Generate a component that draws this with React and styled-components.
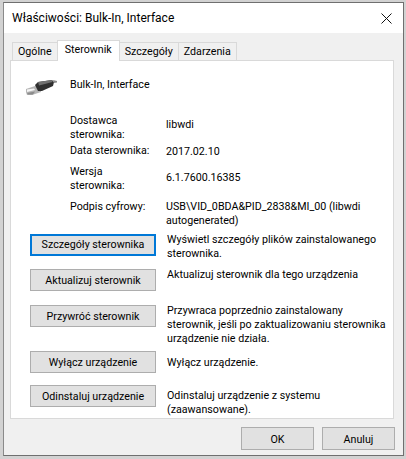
import React from 'react'
import styled, { createGlobalStyle } from 'styled-components'

const Global = createGlobalStyle`
  html, body { margin: 0; padding: 0; background: #d2d2d2; }
  body { font-family: Roboto, "Liberation Sans", sans-serif; font-size: 10.7px; color: #000; }
  * { box-sizing: border-box; }
`

const Page = styled.div`
  width: 406px;
  height: 459px;
  padding: 2px 2px 3px 3px;
`

const Dialog = styled.div`
  width: 401px;
  height: 454px;
  display: flex;
  flex-direction: column;
  background: #f0f0f0;
  border: 1px solid #6f6f6f;
  border-left-color: #8a8a8a;
`

const TitleBar = styled.div`
  height: 30px;
  flex: none;
  display: flex;
  align-items: center;
  justify-content: space-between;
  padding: 0 11px 0 8px;
  background: #fff;
`

const Title = styled.span`
  font-size: 12px;
`

const TabStrip = styled.div`
  display: flex;
  align-items: flex-end;
  height: 28px;
  flex: none;
  padding-left: 8px;
  margin-bottom: -1px;
  position: relative;
  z-index: 1;
`

const Tab = styled.div`
  height: ${p => (p.$active ? '21px' : '19px')};
  padding: ${p => (p.$active ? '0 7px 3px 7px' : '0 5px')};
  margin-right: -1px;
  display: flex;
  align-items: center;
  background: ${p => (p.$active ? '#fff' : '#f0f0f0')};
  border: 1px solid #d9d9d9;
  border-bottom: ${p => (p.$active ? 'none' : '1px solid #d9d9d9')};
  position: relative;
  z-index: ${p => (p.$active ? 1 : 0)};
`

const Panel = styled.div`
  margin-left: 6px;
  width: 384px;
  height: 359px;
  flex: none;
  background: #fff;
  border: 1px solid #d9d9d9;
  padding: 16px 0 0 15px;
`

const DeviceRow = styled.div`
  display: flex;
  align-items: flex-start;
  gap: 12px;
  height: 37px;
`

const DeviceName = styled.span`
  line-height: 15px;
`

const Info = styled.div`
  display: grid;
  grid-template-columns: 96px 220px;
  padding-left: 44px;
  line-height: 14px;
`

const Label = styled.div`
  margin-bottom: ${p => p.$gap}px;
`

const Value = styled.div`
  padding-top: ${p => p.$top || 0}px;
`

const Actions = styled.div`
  display: flex;
  flex-direction: column;
  margin-top: 6px;
  padding-left: 4px;
`

const Action = styled.div`
  display: grid;
  grid-template-columns: 126px 222px;
  column-gap: 11px;
  height: ${p => p.$height}px;
  line-height: 14px;
`

const ActionText = styled.div`
  margin-top: ${p => p.$top}px;
`

const Button = styled.div`
  height: 22px;
  padding-top: ${p => (p.$focused ? 0 : 1)}px;
  display: flex;
  align-items: center;
  justify-content: center;
  background: #e1e1e1;
  border: ${p => (p.$focused ? '2px solid #0078d7' : '1px solid #adadad')};
`

const Footer = styled.div`
  flex: 1;
  display: flex;
  justify-content: flex-end;
  gap: 8px;
  padding: 8px 8px 0 0;
`

const FooterButton = styled(Button)`
  width: 73px;
  height: 23px;
`

const CloseIcon = () => (
  <svg width="11" height="11" viewBox="0 0 11 11">
    <path d="M0.5 0.5 L10.5 10.5 M10.5 0.5 L0.5 10.5" stroke="#111" strokeWidth="1" fill="none" />
  </svg>
)

const UsbIcon = () => (
  <svg width="32" height="20" viewBox="0 0 32 20">
    <path d="M0 12 L9 9 L15 11 L15 15 L6 18 L1 18 L0 15 Z" fill="#b5b5b5" />
    <path d="M1 12.5 L8 11.5 L9 13 L1 15 Z" fill="#f5f5f5" />
    <path d="M1 16 L9 14.5 L7 17.5 L2 17.5 Z" fill="#8c8c8c" />
    <path d="M9 8 L12 5 L26 3 L28 5 L27 9 L16 14 L12 14 Z" fill="#2f2f2f" />
    <path d="M12 5 L26 3 L26.5 5 L13 8.5 Z" fill="#707070" />
    <path d="M27 3 L31 4 L31 5.5 L28 6 Z" fill="#8a8a8a" />
  </svg>
)

const actions = [
  { label: 'Szczegóły sterownika', text: 'Wyświetl szczegóły plików zainstalowanego sterownika.', height: 35, top: -1, focused: true },
  { label: 'Aktualizuj sterownik', text: 'Aktualizuj sterownik dla tego urządzenia', height: 36, top: -1 },
  { label: 'Przywróć sterownik', text: 'Przywraca poprzednio zainstalowany sterownik, jeśli po zaktualizowaniu sterownika urządzenie nie działa.', height: 46, top: -1 },
  { label: 'Wyłącz urządzenie', text: 'Wyłącz urządzenie.', height: 34, top: 5 },
  { label: 'Odinstaluj urządzenie', text: 'Odinstaluj urządzenie z systemu (zaawansowane).', height: 32, top: 4 },
]

export default function App() {
  return (
    <Page>
      <Global />
      <Dialog>
        <TitleBar>
          <Title>Właściwości: Bulk-In, Interface</Title>
          <CloseIcon />
        </TitleBar>
        <TabStrip>
          <Tab>Ogólne</Tab>
          <Tab $active>Sterownik</Tab>
          <Tab>Szczegóły</Tab>
          <Tab>Zdarzenia</Tab>
        </TabStrip>
        <Panel>
          <DeviceRow>
            <UsbIcon />
            <DeviceName>Bulk-In, Interface</DeviceName>
          </DeviceRow>
          <Info>
            <Label $gap={2}>Dostawca<br />sterownika:</Label>
            <Value $top={4}>libwdi</Value>
            <Label $gap={7}>Data sterownika:</Label>
            <Value $top={1}>2017.02.10</Value>
            <Label $gap={7}>Wersja<br />sterownika:</Label>
            <Value $top={6}>6.1.7600.16385</Value>
            <Label $gap={0}>Podpis cyfrowy:</Label>
            <Value>USB\VID_0BDA&amp;PID_2838&amp;MI_00 (libwdi autogenerated)</Value>
          </Info>
          <Actions>
            {actions.map(a => (
              <Action key={a.label} $height={a.height}>
                <Button $focused={a.focused}>{a.label}</Button>
                <ActionText $top={a.top}>{a.text}</ActionText>
              </Action>
            ))}
          </Actions>
        </Panel>
        <Footer>
          <FooterButton>OK</FooterButton>
          <FooterButton>Anuluj</FooterButton>
        </Footer>
      </Dialog>
    </Page>
  )
}
